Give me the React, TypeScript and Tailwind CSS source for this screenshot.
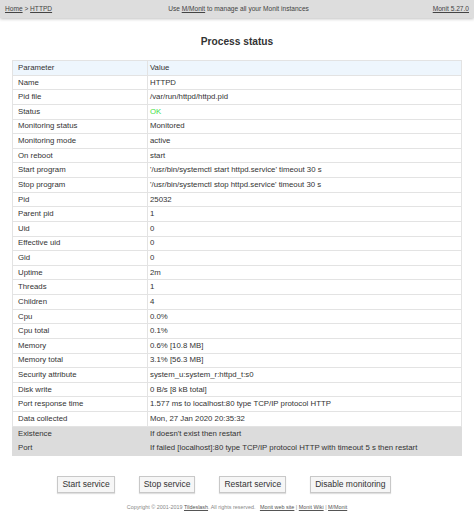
import React from "react";

const rows: [string, string, string?][] = [
  ["Name", "HTTPD"],
  ["Pid file", "/var/run/httpd/httpd.pid"],
  ["Status", "OK", "ok"],
  ["Monitoring status", "Monitored"],
  ["Monitoring mode", "active"],
  ["On reboot", "start"],
  ["Start program", "'/usr/bin/systemctl start httpd.service' timeout 30 s"],
  ["Stop program", "'/usr/bin/systemctl stop httpd.service' timeout 30 s"],
  ["Pid", "25032"],
  ["Parent pid", "1"],
  ["Uid", "0"],
  ["Effective uid", "0"],
  ["Gid", "0"],
  ["Uptime", "2m"],
  ["Threads", "1"],
  ["Children", "4"],
  ["Cpu", "0.0%"],
  ["Cpu total", "0.1%"],
  ["Memory", "0.6% [10.8 MB]"],
  ["Memory total", "3.1% [56.3 MB]"],
  ["Security attribute", "system_u:system_r:httpd_t:s0"],
  ["Disk write", "0 B/s [8 kB total]"],
  ["Port response time", "1.577 ms to localhost:80 type TCP/IP protocol HTTP"],
  ["Data collected", "Mon, 27 Jan 2020 20:35:32"],
  ["Existence", "If doesn't exist then restart", "grey"],
  ["Port", "If failed [localhost]:80 type TCP/IP protocol HTTP with timeout 5 s then restart", "grey"],
];

export default function App() {
  return (
    <div
      className="w-[474px] h-[526px] bg-white text-[#333] overflow-hidden"
      style={{ fontFamily: '"Liberation Sans", Arial, sans-serif' }}
    >
      <div className="h-[18px] bg-[#dddddd] shadow-[0_1px_3px_rgba(0,0,0,0.25)] flex items-center justify-between px-[5px] text-[6.6px] text-[#444]">
        <div className="w-[120px]">
          <span className="underline">Home</span> &gt; <span className="underline">HTTPD</span>
        </div>
        <div className="pl-[3px]">
          Use <span className="underline">M/Monit</span> to manage all your Monit instances
        </div>
        <div className="w-[120px] text-right">
          <span className="underline">Monit 5.27.0</span>
        </div>
      </div>

      <div className="text-center font-bold text-[10.2px] leading-[12px] text-[#333] mt-[18px] mb-[12px]">
        Process status
      </div>

      <div className="px-[12px]">
        <table className="w-[450px] border-collapse text-[7.8px] text-[#333]">
          <tbody>
            <tr className="bg-[#eef6fd]">
              <td className="w-[135px] h-[14.63px] border border-[#e3e3e3] pl-[5px] py-0 leading-none">Parameter</td>
              <td className="h-[14.63px] border border-[#e3e3e3] pl-[2px] py-0 leading-none">Value</td>
            </tr>
            {rows.map(([k, v, t]) => (
              <tr key={k} className={t === "grey" ? "bg-[#dcdcdc]" : "bg-white"}>
                <td className={`h-[14.63px] border ${t === "grey" ? "border-[#dcdcdc]" : "border-[#e3e3e3]"} pl-[5px] py-0 leading-none`}>{k}</td>
                <td
                  className={`h-[14.63px] border ${t === "grey" ? "border-[#dcdcdc]" : "border-[#e3e3e3]"} pl-[2px] py-0 leading-none whitespace-nowrap ${
                    t === "ok" ? "text-[#44e044]" : ""
                  }`}
                >
                  {v}
                </td>
              </tr>
            ))}
          </tbody>
        </table>
      </div>

      <div className="flex justify-center gap-[24px] mt-[20px] pr-[26px]">
        {["Start service", "Stop service", "Restart service", "Disable monitoring"].map((b) => (
          <div
            key={b}
            className="h-[17px] px-[4px] flex items-center border border-[#c8c8c8] bg-[#f6f6f6] shadow-[0_1px_1px_rgba(0,0,0,0.12)] text-[8.5px] text-[#333]"
          >
            {b}
          </div>
        ))}
      </div>

      <div className="text-center text-[5.4px] leading-[7px] text-[#888] mt-[11px]">
        Copyright © 2001-2019 <span className="underline text-[#555]">Tildeslash</span>. All rights reserved.{" "}
        <span className="ml-[3px] underline text-[#555]">Monit web site</span> |{" "}
        <span className="underline text-[#555]">Monit Wiki</span> |{" "}
        <span className="underline text-[#555]">M/Monit</span>
      </div>
    </div>
  );
}
